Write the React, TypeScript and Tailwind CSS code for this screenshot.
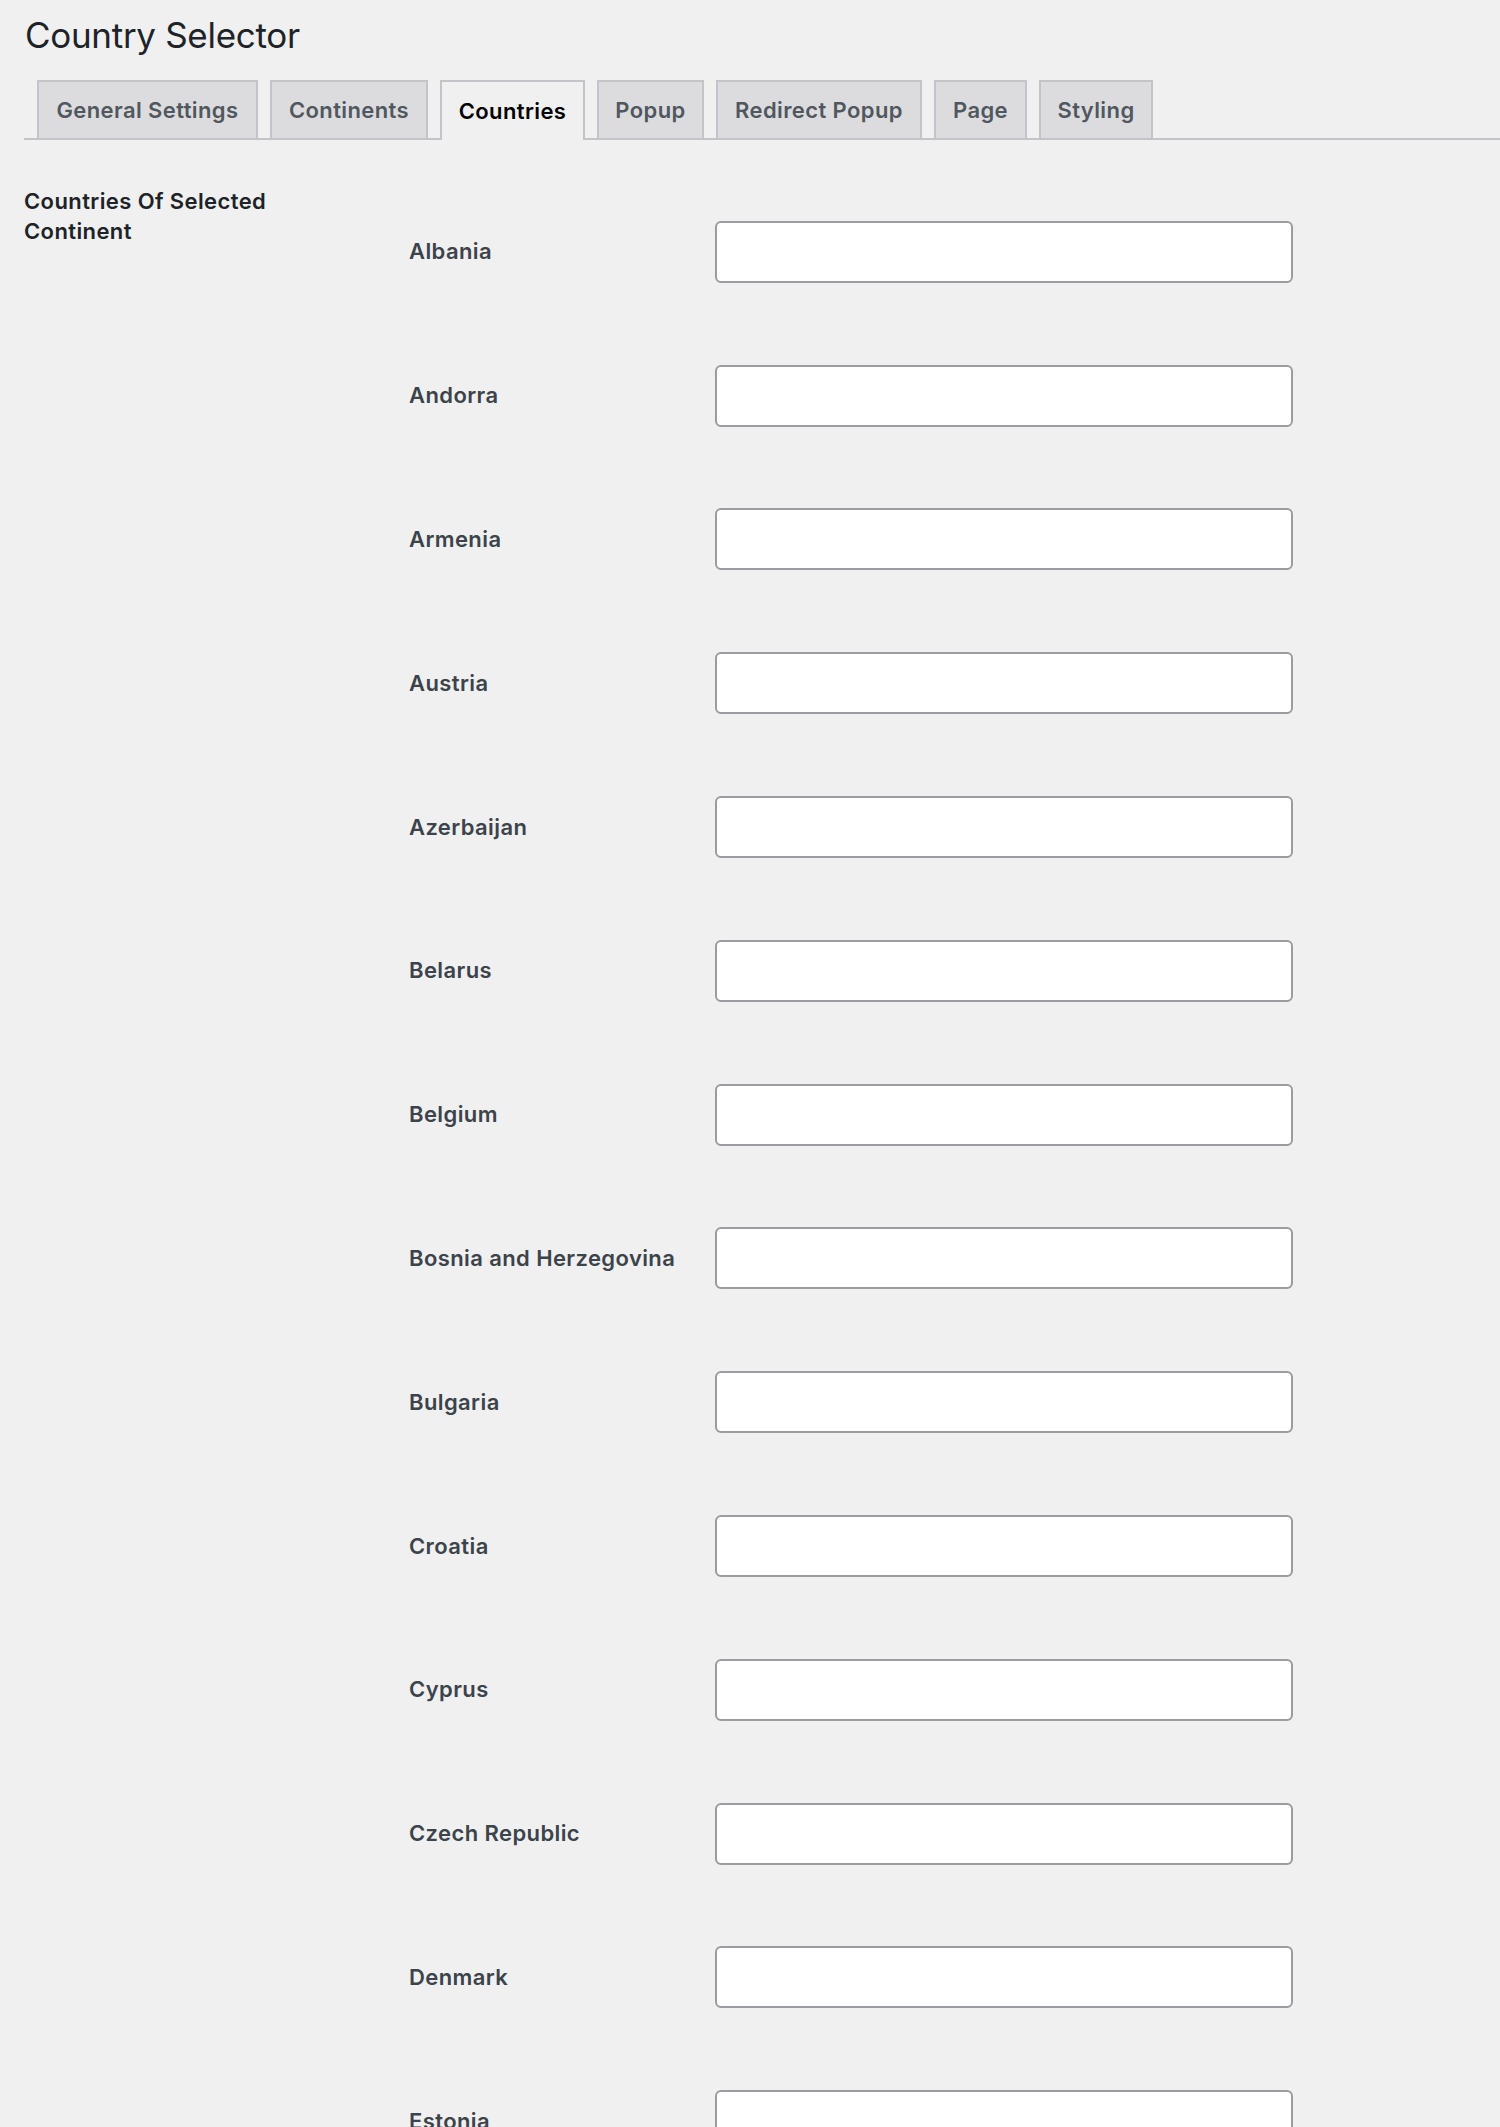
const TABS = [
  { label: "General Settings", width: "w-[221px]" },
  { label: "Continents", width: "w-[158px]" },
  { label: "Countries", width: "w-[145px]" },
  { label: "Popup", width: "w-[107px]" },
  { label: "Redirect Popup", width: "w-[206px]" },
  { label: "Page", width: "w-[93px]" },
  { label: "Styling", width: "w-[114px]" },
];

const COUNTRIES = [
  "Albania",
  "Andorra",
  "Armenia",
  "Austria",
  "Azerbaijan",
  "Belarus",
  "Belgium",
  "Bosnia and Herzegovina",
  "Bulgaria",
  "Croatia",
  "Cyprus",
  "Czech Republic",
  "Denmark",
  "Estonia",
  "Finland",
];

export default function App() {
  return (
    <div
      className="min-h-screen bg-[#f0f0f1] text-[#1d2327]"
      style={{ fontFamily: "Inter, 'Noto Sans', sans-serif" }}
    >
      <h1 className="pl-[25px] pt-[12px] text-[35px] font-normal leading-[46px] tracking-[-0.3px] text-[#1d2327]">
        Country Selector
      </h1>

      <nav className="ml-[24px] mt-[22px] flex gap-[12px] border-b-2 border-[#c3c4c7] pl-[13px]">
        {TABS.map((tab) => {
          const active = tab.label === "Countries";
          return (
            <span
              key={tab.label}
              className={
                active
                  ? `${tab.width} -mb-[2px] flex h-[60px] items-center justify-center border-2 border-b-0 border-[#c3c4c7] bg-[#f0f0f1] text-[22px] font-semibold tracking-[0.4px] text-black`
                  : `${tab.width} flex h-[58px] items-center justify-center border-2 border-b-0 border-[#c3c4c7] bg-[#dcdcde] text-[22px] font-semibold tracking-[0.4px] text-[#50575e]`
              }
            >
              {tab.label}
            </span>
          );
        })}
      </nav>

      <div className="mt-[40px] flex pl-[24px]">
        <div className="w-[385px] shrink-0 pt-[6px] text-[22px] font-semibold leading-[30px] tracking-[0.4px] text-[#1d2327]">
          Countries Of Selected
          <br />
          Continent
        </div>

        <div className="flex flex-col">
          {COUNTRIES.map((name) => (
            <div key={name} className="flex h-[143.8px] items-center">
              <label className="w-[306px] shrink-0 text-[22px] font-semibold tracking-[0.4px] text-[#3c434a]">
                {name}
              </label>
              <input
                type="text"
                className="h-[62px] w-[578px] rounded-[6px] border-2 border-[#9a9ca0] bg-white"
              />
            </div>
          ))}
        </div>
      </div>
    </div>
  );
}
